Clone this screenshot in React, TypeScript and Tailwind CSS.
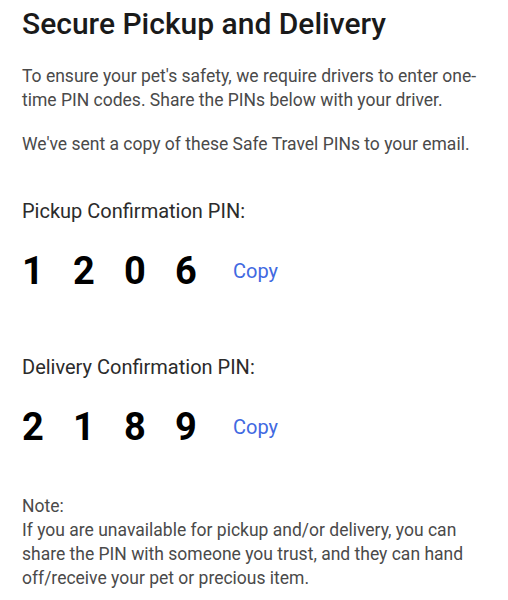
import React from 'react';

const pins = [
  { label: 'Pickup Confirmation PIN:', code: '1206' },
  { label: 'Delivery Confirmation PIN:', code: '2189' },
];

const PinBlock: React.FC<{ label: string; code: string }> = ({ label, code }) => (
  <div>
    <p className="text-[20px] leading-[26px] text-[#2b2b2b]">{label}</p>
    <div className="mt-[25px] flex items-center">
      {code.split('').map((d, i) => (
        <span key={i} className="w-[51px] text-[38px] leading-[44px] font-bold text-black">
          {d}
        </span>
      ))}
      <button className="ml-[7px] text-[20px] leading-[28px] text-[#4169e1]">Copy</button>
    </div>
  </div>
);

export default function App() {
  return (
    <div className="bg-white pl-[22px] pr-[20px] pt-[4px] font-['Roboto',sans-serif]" style={{ minHeight: 600 }}>
      <h1 className="text-[30px] leading-[40px] font-medium text-[#1a1a1a]">Secure Pickup and Delivery</h1>
      <p className="mt-[20px] text-[17.5px] leading-[24px] text-[#4a4a4a]">
        To ensure your pet's safety, we require drivers to enter one-time PIN codes. Share the PINs below with your driver.
      </p>
      <p className="mt-[20px] text-[17.5px] leading-[24px] text-[#4a4a4a]">
        We've sent a copy of these Safe Travel PINs to your email.
      </p>
      <div className="mt-[42px] flex flex-col gap-[61px]">
        {pins.map((p) => (
          <PinBlock key={p.code} label={p.label} code={p.code} />
        ))}
      </div>
      <div className="mt-[45px] text-[17.5px] leading-[24px] text-[#4a4a4a]">
        <p>Note:</p>
        <p>
          If you are unavailable for pickup and/or delivery, you can share the PIN with someone you trust, and they can
          hand off/receive your pet or precious item.
        </p>
      </div>
    </div>
  );
}
